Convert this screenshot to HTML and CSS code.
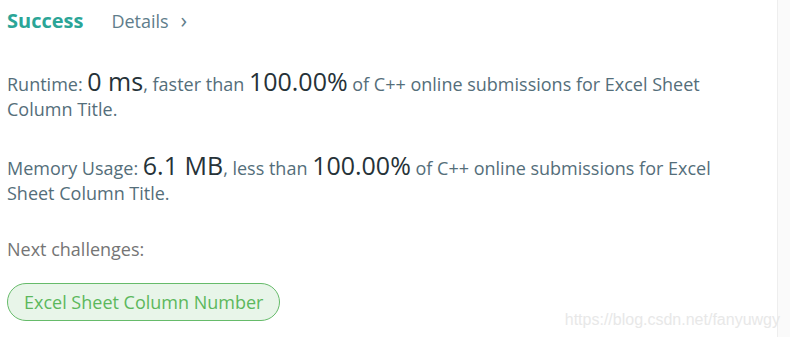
FILE: index.html
```html
<!DOCTYPE html>
<html lang="en">
<head>
    <meta charset="UTF-8">
    <title>Submission Detail</title>
    <link rel="stylesheet" href="styles.css">
</head>
<body>
    <div class="page">
        <div class="result">
            <div class="header">
                <span class="status">Success</span>
                <a class="details" href="#">Details <span class="chevron">&#8250;</span></a>
            </div>
            <p class="stat">Runtime: <span class="big">0 ms</span>, faster than <span class="big">100.00%</span> of C++ online submissions for Excel Sheet Column Title.</p>
            <p class="stat">Memory Usage: <span class="big">6.1 MB</span>, less than <span class="big">100.00%</span> of C++ online submissions for Excel Sheet Column Title.</p>
            <p class="next">Next challenges:</p>
            <div class="tags">
                <a class="tag" href="#">Excel Sheet Column Number</a>
            </div>
        </div>
        <div class="sidebar"></div>
        <div class="watermark">https://blog.csdn.net/fanyuwgy</div>
    </div>
</body>
</html>
```

FILE: styles.css
```css
body {
    margin: 0;
    font-family: "Open Sans", "Noto Sans", sans-serif;
    background-color: #fff;
}

.page {
    position: relative;
    display: flex;
    height: 337px;
    overflow: hidden;
}

.result {
    width: 770px;
    padding: 0 0 0 7px;
    border-right: 1px solid #eee;
}

.sidebar {
    flex: 1;
    background-color: #fafafa;
}

.header {
    display: flex;
    align-items: baseline;
    height: 40px;
}

.status {
    font-size: 20px;
    font-weight: bold;
    color: #2ba597;
    line-height: 41px;
}

.details {
    margin-left: 28px;
    font-size: 18px;
    color: #607d8b;
    text-decoration: none;
}

.chevron {
    margin-left: 7px;
    font-size: 22px;
}

.stat {
    max-width: 725px;
    margin: 29px 0 0;
    font-size: 18px;
    line-height: 25px;
    color: #546e7a;
}

.stat + .stat {
    margin-top: 31px;
}

.big {
    font-size: 25px;
    line-height: 25px;
    color: #263238;
}

.next {
    margin: 31px 0 0;
    font-size: 18px;
    line-height: 25px;
    color: #757575;
}

.tags {
    margin-top: 21px;
}

.tag {
    display: inline-block;
    padding: 7px 16px;
    line-height: 22px;
    border: 1px solid #66bb6a;
    border-radius: 20px;
    background-color: #e8f5e9;
    color: #5cb85c;
    font-size: 18px;
    text-decoration: none;
}

.watermark {
    position: absolute;
    right: 10px;
    bottom: 8px;
    font-family: "Liberation Sans", sans-serif;
    font-size: 16px;
    color: #e8e8e8;
}
```
